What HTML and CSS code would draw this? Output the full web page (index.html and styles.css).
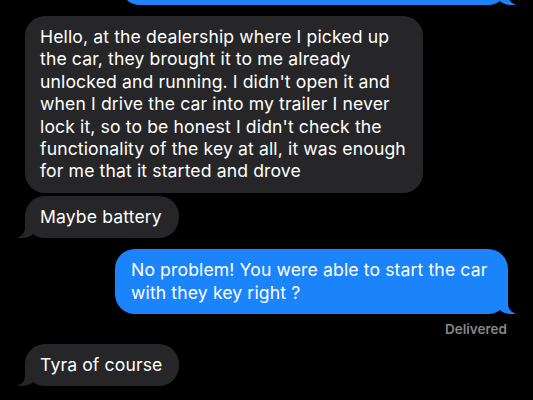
FILE: index.html
```html
<!DOCTYPE html>
<html lang="en">
<head>
    <meta charset="UTF-8">
    <meta name="viewport" content="width=device-width, initial-scale=1.0">
    <title>Messages</title>
    <link rel="stylesheet" href="styles.css">
</head>
<body>

    <div class="thread">
        <!-- bubble scrolled off the top -->
        <div class="msg sent tail cut"></div>

        <div class="msg recv">Hello, at the dealership where I picked up the car, they brought it to me already unlocked and running. I didn't open it and when I drive the car into my trailer I never lock it, so to be honest I didn't check the functionality of the key at all, it was enough for me that it started and drove</div>
        <div class="msg recv tail">Maybe battery</div>

        <div class="msg sent tail">No problem! You were able to start the car with they key right ?</div>
        <div class="status">Delivered</div>

        <div class="msg recv tail">Tyra of course</div>
    </div>

</body>
</html>
```

FILE: styles.css
```css
body {
    margin: 0;
    background-color: #000;
    font-family: 'Inter', 'Liberation Sans', sans-serif;
    overflow: hidden;
}

.thread {
    display: flex;
    flex-direction: column;
    padding: 0 25px;
}

.msg {
    position: relative;
    max-width: 366px;
    padding: 10px 17px 10px 15px;
    border-radius: 20px;
    font-size: 17.6px;
    line-height: 22.4px;
    letter-spacing: 0.12px;
    color: #fff;
}

.recv {
    align-self: flex-start;
    background-color: #262628;
    margin-top: 3px;
}

.sent {
    align-self: flex-end;
    background-color: #1b84fb;
    max-width: 361px;
    margin-top: 11px;
    padding: 10px 16px;
}

.recv + .sent,
.sent + .recv,
.cut + .recv {
    margin-top: 11px;
}

.cut {
    width: 356px;
    height: 20px;
    margin-top: -35px;
}

/* tails */
.tail::before,
.tail::after {
    content: "";
    position: absolute;
    bottom: 0;
    height: 20px;
}

.recv.tail::before {
    left: -7px;
    width: 20px;
    background-color: #262628;
    border-bottom-right-radius: 15px;
}

.recv.tail::after {
    left: -10px;
    width: 10px;
    background-color: #000;
    border-bottom-right-radius: 10px;
}

.sent.tail::before {
    right: -7px;
    width: 20px;
    background-color: #1b84fb;
    border-bottom-left-radius: 15px;
}

.sent.tail::after {
    right: -10px;
    width: 10px;
    background-color: #000;
    border-bottom-left-radius: 10px;
}

.status {
    align-self: flex-end;
    margin: 7px 1px 0 0;
    font-size: 13.5px;
    font-weight: 600;
    line-height: 16px;
    color: #86868b;
}

.status + .msg {
    margin-top: 7px;
}
```
